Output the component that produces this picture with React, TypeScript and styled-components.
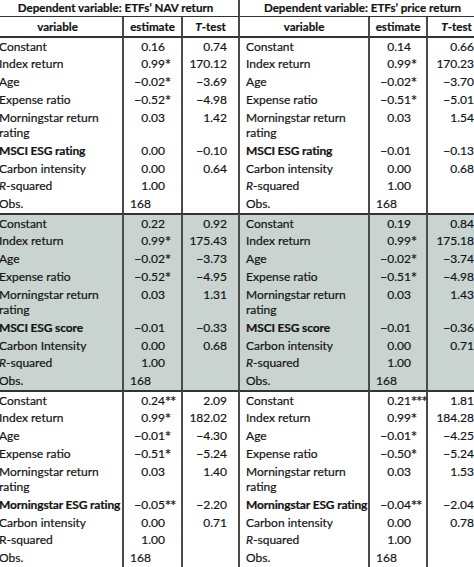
import React from "react";
import styled, { createGlobalStyle } from "styled-components";

const GlobalStyle = createGlobalStyle`
  html, body {
    margin: 0;
    padding: 0;
    background: #ffffff;
  }
  body {
    width: 474px;
    height: 567px;
    overflow: hidden;
    font-family: Lato, "Liberation Sans", sans-serif;
  }
`;

const Table = styled.table`
  margin-left: -7px;
  width: 492px;
  table-layout: fixed;
  border-collapse: separate;
  border-spacing: 0;
  font-size: 12px;
  line-height: 15.7px;
  color: #141414;
  -webkit-text-stroke: 0.2px #141414;
`;

const Group = styled.th<{ $last?: boolean }>`
  font-weight: 700;
  font-size: 11.6px;
  text-align: center;
  padding: 0;
  height: 16px;
  border-bottom: 1px solid #333;
  border-right: ${(p) => (p.$last ? "none" : "2px solid #4a4a4a")};
  white-space: nowrap;
`;

const HeadCell = styled.th<{ $divider?: boolean }>`
  font-weight: 700;
  font-size: 11.6px;
  text-align: center;
  padding: 2px 0 1px;
  border-right: ${(p) => (p.$divider ? "2px solid #4a4a4a" : "none")};
`;

const Section = styled.tbody<{ $shaded?: boolean }>`
  background: ${(p) => (p.$shaded ? "#c9d3cf" : "transparent")};

  tr:first-child td {
    border-top: 2px solid #333;
  }
`;

const Label = styled.td<{ $bold?: boolean }>`
  padding: 1px 2px 1px 6px;
  text-align: left;
  vertical-align: top;
  white-space: nowrap;
  overflow: hidden;
  font-weight: ${(p) => (p.$bold ? 700 : 400)};
  letter-spacing: ${(p) => (p.$bold ? "-0.15px" : "0")};
  border-right: 2px solid #4a4a4a;
`;

const Estimate = styled.td`
  padding: 1px 0;
  vertical-align: top;
  white-space: nowrap;
  border-right: 2px solid #4a4a4a;
`;

const Num = styled.span<{ $count?: boolean }>`
  display: inline-block;
  width: ${(p) => (p.$count ? "auto" : "41px")};
  padding-left: ${(p) => (p.$count ? "6px" : "0")};
  text-align: ${(p) => (p.$count ? "left" : "right")};
`;

const Stars = styled.span`
  font-family: "DejaVu Sans", sans-serif;
  font-size: 10px;
  letter-spacing: 0.3px;
  line-height: 0;
  position: relative;
  top: -1px;
  margin-left: 0.5px;
`;

const TTest = styled.td<{ $divider?: boolean }>`
  padding: 1px 11px 1px 0;
  text-align: right;
  vertical-align: top;
  white-space: nowrap;
  border-right: ${(p) => (p.$divider ? "2px solid #4a4a4a" : "none")};
`;

type Half = {
  label: React.ReactNode;
  bold?: boolean;
  est: string;
  t?: string;
};

type RowDef = [Half, Half];

const R = (
  <>
    <i>R</i>-squared
  </>
);
const Rup = <>R-squared</>;
const Morning = (
  <>
    Morningstar return
    <br />
    rating
  </>
);

const h = (label: React.ReactNode, est: string, t?: string, bold?: boolean): Half => ({
  label,
  est,
  t,
  bold,
});

const sections: { shaded?: boolean; rows: RowDef[] }[] = [
  {
    rows: [
      [h("Constant", "0.16", "0.74"), h("Constant", "0.14", "0.66")],
      [h("Index return", "0.99*", "170.12"), h("Index return", "0.99*", "170.23")],
      [h("Age", "−0.02*", "−3.69"), h("Age", "−0.02*", "−3.70")],
      [h("Expense ratio", "−0.52*", "−4.98"), h("Expense ratio", "−0.51*", "−5.01")],
      [h(Morning, "0.03", "1.42"), h(Morning, "0.03", "1.54")],
      [h("MSCI ESG rating", "0.00", "−0.10", true), h("MSCI ESG rating", "−0.01", "−0.13", true)],
      [h("Carbon intensity", "0.00", "0.64"), h("Carbon intensity", "0.00", "0.68")],
      [h(R, "1.00"), h(R, "1.00")],
      [h("Obs.", "168"), h("Obs.", "168")],
    ],
  },
  {
    shaded: true,
    rows: [
      [h("Constant", "0.22", "0.92"), h("Constant", "0.19", "0.84")],
      [h("Index return", "0.99*", "175.43"), h("Index return", "0.99*", "175.18")],
      [h("Age", "−0.02*", "−3.73"), h("Age", "−0.02*", "−3.74")],
      [h("Expense ratio", "−0.52*", "−4.95"), h("Expense ratio", "−0.51*", "−4.98")],
      [h(Morning, "0.03", "1.31"), h(Morning, "0.03", "1.43")],
      [h("MSCI ESG score", "−0.01", "−0.33", true), h("MSCI ESG score", "−0.01", "−0.36", true)],
      [h("Carbon Intensity", "0.00", "0.68"), h("Carbon intensity", "0.00", "0.71")],
      [h(R, "1.00"), h(R, "1.00")],
      [h("Obs.", "168"), h("Obs.", "168")],
    ],
  },
  {
    rows: [
      [h("Constant", "0.24**", "2.09"), h("Constant", "0.21***", "1.81")],
      [h("Index return", "0.99*", "182.02"), h("Index return", "0.99*", "184.28")],
      [h("Age", "−0.01*", "−4.30"), h("Age", "−0.01*", "−4.25")],
      [h("Expense ratio", "−0.51*", "−5.24"), h("Expense ratio", "−0.50*", "−5.24")],
      [h(Morning, "0.03", "1.40"), h(Morning, "0.03", "1.53")],
      [
        h("Morningstar ESG rating", "−0.05**", "−2.20", true),
        h("Morningstar ESG rating", "−0.04**", "−2.04", true),
      ],
      [h("Carbon intensity", "0.00", "0.71"), h("Carbon intensity", "0.00", "0.78")],
      [h(Rup, "1.00"), h(R, "1.00")],
      [h("Obs.", "168"), h("Obs.", "168")],
    ],
  },
];

const EstimateValue: React.FC<{ value: string }> = ({ value }) => {
  const match = value.match(/^([^*]*)(\*+)?$/);
  const num = match ? match[1] : value;
  const stars = match && match[2] ? match[2] : "";
  const isCount = !num.includes(".");
  return (
    <>
      <Num $count={isCount}>{num}</Num>
      {stars && <Stars>{stars}</Stars>}
    </>
  );
};

const HalfCells: React.FC<{ half: Half; divider?: boolean }> = ({ half, divider }) => (
  <>
    <Label $bold={half.bold}>{half.label}</Label>
    <Estimate>
      <EstimateValue value={half.est} />
    </Estimate>
    <TTest $divider={divider}>{half.t}</TTest>
  </>
);

const ColumnHeads: React.FC<{ divider?: boolean }> = ({ divider }) => (
  <>
    <HeadCell $divider>variable</HeadCell>
    <HeadCell $divider>estimate</HeadCell>
    <HeadCell $divider={divider}>
      <i>T</i>-test
    </HeadCell>
  </>
);

export default function App() {
  return (
    <>
      <GlobalStyle />
      <Table>
        <colgroup>
          <col style={{ width: 131 }} />
          <col style={{ width: 59 }} />
          <col style={{ width: 57 }} />
          <col style={{ width: 130 }} />
          <col style={{ width: 58 }} />
          <col style={{ width: 57 }} />
        </colgroup>
        <thead>
          <tr>
            <Group colSpan={3}>Dependent variable: ETFs’ NAV return</Group>
            <Group colSpan={3} $last>
              Dependent variable: ETFs’ price return
            </Group>
          </tr>
          <tr>
            <ColumnHeads divider />
            <ColumnHeads />
          </tr>
        </thead>
        {sections.map((section, si) => (
          <Section key={si} $shaded={section.shaded}>
            {section.rows.map(([left, right], ri) => (
              <tr key={ri}>
                <HalfCells half={left} divider />
                <HalfCells half={right} />
              </tr>
            ))}
          </Section>
        ))}
      </Table>
    </>
  );
}
